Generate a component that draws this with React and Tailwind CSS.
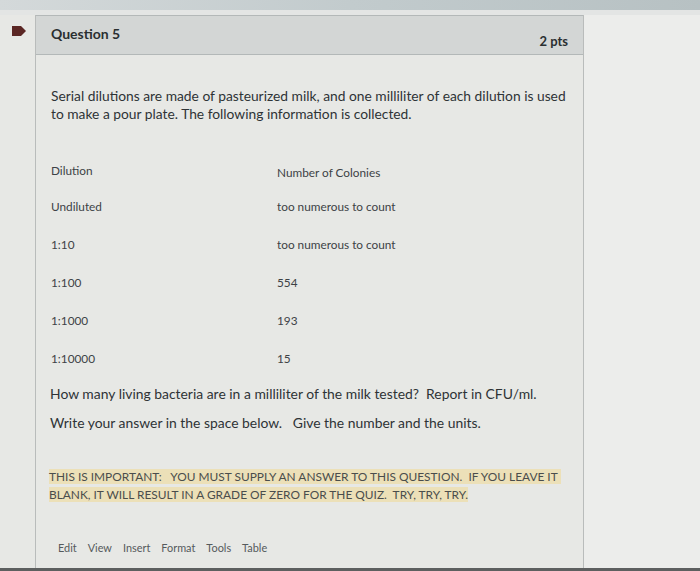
import React from "react";

const rows = [
  ["Undiluted", "too numerous to count"],
  ["1:10", "too numerous to count"],
  ["1:100", "554"],
  ["1:1000", "193"],
  ["1:10000", "15"],
];

export default function App() {
  return (
    <div
      className="w-[700px] h-[571px] overflow-hidden flex flex-col bg-[#e7e8e5] text-[#333a3d]"
      style={{ fontFamily: "Lato, 'Open Sans', sans-serif" }}
    >
      <div className="h-[10px] shrink-0 bg-gradient-to-r from-[#d4d9da] via-[#c2cbcd] to-[#b7c1c3]" />
      <div className="h-[5px] shrink-0 bg-[#e3e5e4]" />
      <div className="flex flex-1 min-h-0">
        <div className="w-[35px] shrink-0 pt-[11px] pl-[12px]">
          <svg width="14" height="10" viewBox="0 0 14 10">
            <polygon points="0,0 9,0 14,5 9,10 0,10" fill="#5b2724" />
          </svg>
        </div>
        <div className="w-[549px] shrink-0 border-l border-r border-[#b9bcbb] flex flex-col">
          <div className="h-[40px] shrink-0 bg-[#d3d6d5] border-t border-b border-[#b3b8b8] flex justify-between px-[15px]">
            <div className="pt-[7px] text-[14px] font-bold text-[#2a2f31]">Question 5</div>
            <div className="pt-[16px] text-[13px] font-bold text-[#2a2f31]">2 pts</div>
          </div>
          <div className="px-[15px] pt-[32px]">
            <p className="-mr-[10px] text-[13.8px] leading-[18px] text-[#2e3336]">
              Serial dilutions are made of pasteurized milk, and one milliliter of each dilution is used to make a pour plate. The following information is collected.
            </p>
            <div className="mt-[31px] text-[11.8px] text-[#3d4245]">
              <div className="flex h-[34px] items-center">
                <div className="w-[226px]">Dilution</div>
                <div className="pt-[3px]">Number of Colonies</div>
              </div>
              {rows.map(([d, n]) => (
                <div key={d} className="flex h-[38px] items-center">
                  <div className="w-[226px]">{d}</div>
                  <div>{n}</div>
                </div>
              ))}
            </div>
            <p className="mt-[7px] -ml-[1px] text-[13.9px] leading-[18px] text-[#2e3336] whitespace-pre">
              {"How many living bacteria are in a milliliter of the milk tested?  Report in CFU/ml."}
            </p>
            <p className="mt-[11px] -ml-[1px] text-[13.9px] leading-[18px] text-[#2e3336] whitespace-pre">
              {"Write your answer in the space below.   Give the number and the units."}
            </p>
            <div className="mt-[36px] -ml-[2px] text-[11.9px] leading-[18px] text-[#4a4d4c]">
              <span className="bg-[#ece0b8] whitespace-pre-wrap [box-decoration-break:clone]">
                {"THIS IS IMPORTANT:   YOU MUST SUPPLY AN ANSWER TO THIS QUESTION.  IF YOU LEAVE IT BLANK, IT WILL RESULT IN A GRADE OF ZERO FOR THE QUIZ.  TRY, TRY, TRY."}
              </span>
            </div>
            <div className="mt-[36px] pl-[7px] flex gap-[11px] text-[10.9px] text-[#555a5c]">
              <span>Edit</span>
              <span>View</span>
              <span>Insert</span>
              <span>Format</span>
              <span>Tools</span>
              <span>Table</span>
            </div>
          </div>
        </div>
        <div className="flex-1 bg-[#ecedeb]" />
      </div>
      <div className="h-[3px] shrink-0 bg-[#5d5f5f]" />
    </div>
  );
}
